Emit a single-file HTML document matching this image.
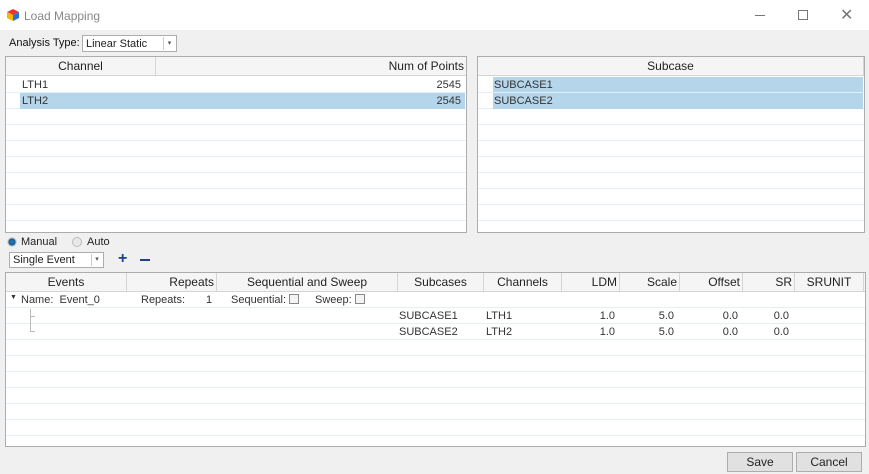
<!DOCTYPE html>
<html><head><style>
*{box-sizing:border-box;margin:0;padding:0}
body{width:869px;height:474px;background:#f0f0f0;font-family:"Liberation Sans",sans-serif;font-size:11px;color:#222;position:relative;overflow:hidden}
.a{position:absolute;white-space:nowrap}
.tb{left:0;top:0;width:869px;height:30px;background:#fff}
.tbl{background:#fff;border:1px solid #adadad}
.hdr{position:absolute;top:0;height:19px;background:#f5f5f5;border-bottom:1px solid #d5d5d5;font-size:12px;line-height:18px;color:#222}
.hc{position:absolute;top:0;height:19px;border-right:1px solid #d5d5d5;padding:0 2px}
.lines{position:absolute;left:0;right:0;background:repeating-linear-gradient(to bottom,transparent 0,transparent 15px,#e3eef7 15px,#e3eef7 16px)}
.sel{position:absolute;background:#b5d5ea}
.btn{background:#e1e1e1;border:1px solid #adadad;font-size:12px;text-align:center;line-height:18px}
.cb{display:inline-block;width:10px;height:10px;border:1px solid #888;background:#f4f4f4;vertical-align:-1px}
.g{color:#333}
</style></head><body>
<div class="a tb"></div>
<svg class="a" style="left:6px;top:8px" width="14" height="14" viewBox="0 0 14 14"><path d="M7 1 L13 4 L7 7 L1 4Z" fill="#e33"/><path d="M1 4 L7 7 L7 13 L1 10Z" fill="#f5b800"/><path d="M13 4 L7 7 L7 13 L13 10Z" fill="#2a6fd6"/></svg>
<div class="a" style="left:24px;top:9px;font-size:12px;color:#888">Load Mapping</div>
<div class="a" style="left:755px;top:15px;width:10px;height:1px;background:#777"></div>
<div class="a" style="left:798px;top:10px;width:10px;height:10px;border:1px solid #777"></div>
<div class="a" style="left:840px;top:5px;font-size:16px;color:#777;font-weight:300">✕</div>

<div class="a" style="left:9px;top:37px;color:#111">Analysis Type:</div>
<div class="a" style="left:82px;top:35px;width:95px;height:17px;background:#fff;border:1px solid #adadad;padding:2px 3px">Linear Static<span class="a" style="right:1px;top:1px;width:12px;height:13px;border-left:1px solid #ccc;font-size:7px;text-align:center;line-height:13px;color:#555">▾</span></div>

<!-- channel table -->
<div class="a tbl" style="left:5px;top:56px;width:462px;height:177px">
 <div class="hdr" style="left:0;width:460px"><div class="hc" style="left:0;width:150px;text-align:center">Channel</div><div class="hc" style="left:150px;width:310px;text-align:right;border-right:none">Num of Points</div></div>
 <div class="lines" style="top:20px;height:155px"></div>
 <div class="sel" style="left:14px;top:36px;width:445px;height:16px"></div>
 <div class="a g" style="left:16px;top:22px">LTH1</div><div class="a g" style="right:5px;top:22px">2545</div>
 <div class="a g" style="left:16px;top:38px">LTH2</div><div class="a g" style="right:5px;top:38px">2545</div>
</div>
<!-- subcase table -->
<div class="a tbl" style="left:477px;top:56px;width:388px;height:177px">
 <div class="hdr" style="left:0;width:386px"><div class="hc" style="left:0;width:386px;text-align:center;border-right:1px solid #d5d5d5">Subcase</div></div>
 <div class="lines" style="top:20px;height:155px"></div>
 <div class="sel" style="left:15px;top:20px;width:370px;height:15px"></div>
 <div class="sel" style="left:15px;top:36px;width:370px;height:16px"></div>
 <div class="a g" style="left:16px;top:22px">SUBCASE1</div>
 <div class="a g" style="left:16px;top:38px">SUBCASE2</div>
</div>

<!-- radios -->
<div class="a" style="left:7px;top:237px;width:10px;height:10px;border-radius:50%;background:radial-gradient(circle,#2a7bc0 0,#1a5c95 3px,#bbb 4px,#eee 5px)"></div>
<div class="a" style="left:21px;top:236px">Manual</div>
<div class="a" style="left:72px;top:237px;width:10px;height:10px;border-radius:50%;background:#e8e8e8;border:1px solid #bbb"></div>
<div class="a" style="left:87px;top:236px">Auto</div>

<div class="a" style="left:9px;top:252px;width:95px;height:16px;background:#fff;border:1px solid #adadad;padding:1px 3px">Single Event<span class="a" style="right:1px;top:1px;width:11px;height:12px;border-left:1px solid #ccc;font-size:7px;text-align:center;line-height:12px;color:#555">▾</span></div>
<div class="a" style="left:118px;top:250px;font-size:16px;font-weight:bold;color:#1f3f8a">+</div>
<div class="a" style="left:140px;top:259px;width:10px;height:2px;background:#1f3f8a"></div>

<!-- events table -->
<div class="a tbl" style="left:5px;top:272px;width:861px;height:175px">
 <div class="hdr" style="left:0;width:859px">
  <div class="hc" style="left:0;width:121px;text-align:center">Events</div>
  <div class="hc" style="left:121px;width:90px;text-align:right">Repeats</div>
  <div class="hc" style="left:211px;width:181px;text-align:center">Sequential and Sweep</div>
  <div class="hc" style="left:392px;width:86px;text-align:center">Subcases</div>
  <div class="hc" style="left:478px;width:78px;text-align:center">Channels</div>
  <div class="hc" style="left:556px;width:58px;text-align:right">LDM</div>
  <div class="hc" style="left:614px;width:60px;text-align:right">Scale</div>
  <div class="hc" style="left:674px;width:63px;text-align:right">Offset</div>
  <div class="hc" style="left:737px;width:52px;text-align:right">SR</div>
  <div class="hc" style="left:789px;width:69px;text-align:center">SRUNIT</div>
 </div>
 <div class="lines" style="top:19px;height:154px"></div>
 <div class="a g" style="left:4px;top:21px;font-size:7px">▼</div>
 <div class="a g" style="left:15px;top:21px">Name:&nbsp; Event_0</div>
 <div class="a g" style="left:135px;top:21px">Repeats:</div><div class="a g" style="left:200px;top:21px">1</div>
 <div class="a g" style="left:225px;top:21px">Sequential: <span class="cb"></span></div>
 <div class="a g" style="left:309px;top:21px">Sweep: <span class="cb"></span></div>
 <div class="a" style="left:24px;top:36px;width:1px;height:22px;background:#bbb"></div>
 <div class="a" style="left:24px;top:43px;width:5px;height:1px;background:#bbb"></div>
 <div class="a" style="left:24px;top:58px;width:5px;height:1px;background:#bbb"></div>
 <div class="a g" style="left:393px;top:37px">SUBCASE1</div><div class="a g" style="left:480px;top:37px">LTH1</div>
 <div class="a g" style="right:250px;top:37px">1.0</div><div class="a g" style="right:191px;top:37px">5.0</div><div class="a g" style="right:127px;top:37px">0.0</div><div class="a g" style="right:76px;top:37px">0.0</div>
 <div class="a g" style="left:393px;top:53px">SUBCASE2</div><div class="a g" style="left:480px;top:53px">LTH2</div>
 <div class="a g" style="right:250px;top:53px">1.0</div><div class="a g" style="right:191px;top:53px">5.0</div><div class="a g" style="right:127px;top:53px">0.0</div><div class="a g" style="right:76px;top:53px">0.0</div>
</div>

<div class="a btn" style="left:727px;top:452px;width:66px;height:20px">Save</div>
<div class="a btn" style="left:796px;top:452px;width:66px;height:20px">Cancel</div>
</body></html>
